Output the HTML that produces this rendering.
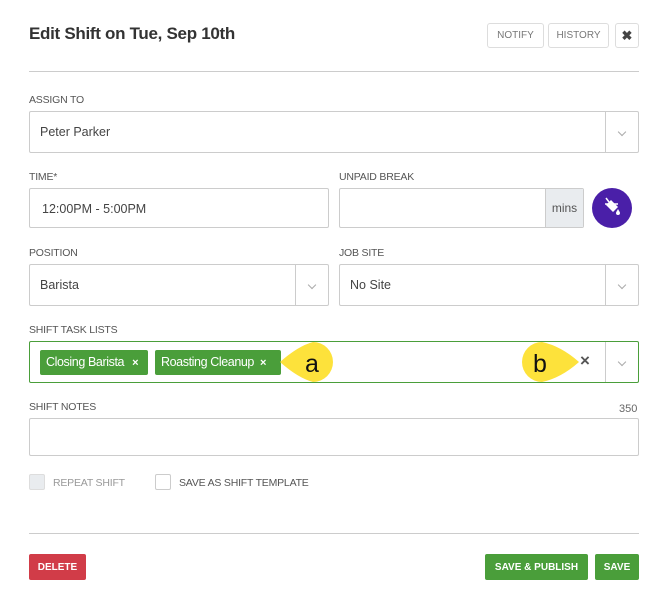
<!DOCTYPE html>
<html><head><style>
*{box-sizing:border-box;margin:0;padding:0}
body{width:668px;height:608px;background:#fff;font-family:"Liberation Sans",sans-serif;color:#333;position:relative;overflow:hidden}
.a{position:absolute}
.lbl{position:absolute;font-size:10.5px;color:#555;letter-spacing:-.2px}
.box{position:absolute;border:1px solid #ccc;border-radius:2px;background:#fff}
.txt{position:absolute;font-size:12.5px;color:#444}
.chev{position:absolute;top:0;bottom:0;width:33px;border-left:1px solid #ccc}
.chev:after{content:"";position:absolute;left:13px;top:50%;width:5px;height:5px;border-right:1px solid #aaa;border-bottom:1px solid #aaa;transform:translateY(-50%) rotate(45deg)}
.btn{position:absolute;border:1px solid #ddd;border-radius:3px;font-size:10px;color:#777;display:flex;align-items:center;justify-content:center}
.g{position:absolute;background:#4a9e3a;color:#fff;border-radius:2px;font-size:10px;font-weight:bold;display:flex;align-items:center;justify-content:center}
.tag{position:absolute;background:#4a9e3a;color:#fff;font-size:12.5px;border-radius:2px;height:25px;line-height:25px;padding-left:6px;letter-spacing:-.4px;white-space:nowrap}
</style></head><body>
<div class="a" style="left:29px;top:24px;font-size:17px;font-weight:bold;color:#333;letter-spacing:-.3px">Edit Shift on Tue, Sep 10th</div>
<div class="btn" style="left:487px;top:23px;width:57px;height:25px">NOTIFY</div>
<div class="btn" style="left:548px;top:23px;width:61px;height:25px">HISTORY</div>
<div class="btn" style="left:615px;top:23px;width:24px;height:25px;font-size:13px;color:#444;font-weight:bold">✖</div>
<div class="a" style="left:29px;top:71px;width:610px;height:1px;background:#ccc"></div>

<div class="lbl" style="left:29px;top:94px">ASSIGN TO</div>
<div class="box" style="left:29px;top:111px;width:610px;height:42px"><div class="txt" style="left:10px;top:13px">Peter Parker</div><div class="chev" style="right:0"></div></div>

<div class="lbl" style="left:29px;top:171px">TIME*</div>
<div class="box" style="left:29px;top:188px;width:300px;height:40px"><div class="txt" style="left:12px;top:13px">12:00PM - 5:00PM</div></div>
<div class="lbl" style="left:339px;top:171px">UNPAID BREAK</div>
<div class="box" style="left:339px;top:188px;width:245px;height:40px"><div class="a" style="right:0;top:0;bottom:0;width:38px;background:#e9ecef;border-left:1px solid #ccc;font-size:12px;color:#555;text-align:center;line-height:38px">mins</div></div>
<div class="a" style="left:592px;top:188px;width:40px;height:40px;border-radius:50%;background:#4a1fa8">
<svg width="40" height="40" viewBox="0 0 40 40"><path d="M14 17l5-5 7 7-5 5z" fill="#fff"/><path d="M13 16l13 0" stroke="#fff" stroke-width="1.5"/><path d="M17 14l-3-4" stroke="#fff" stroke-width="1.5"/><path d="M26 21c-1 2-2 3-2 4a2 2 0 0 0 4 0c0-1-1-2-2-4z" fill="#fff"/></svg></div>

<div class="lbl" style="left:29px;top:247px">POSITION</div>
<div class="box" style="left:29px;top:264px;width:300px;height:42px"><div class="txt" style="left:10px;top:13px">Barista</div><div class="chev" style="right:0"></div></div>
<div class="lbl" style="left:339px;top:247px">JOB SITE</div>
<div class="box" style="left:339px;top:264px;width:300px;height:42px"><div class="txt" style="left:10px;top:13px">No Site</div><div class="chev" style="right:0"></div></div>

<div class="lbl" style="left:29px;top:324px">SHIFT TASK LISTS</div>
<div class="box" style="left:29px;top:341px;width:610px;height:42px;border-color:#4a9e3a"><div class="chev" style="right:0"></div></div>
<div class="tag" style="left:40px;top:350px;width:108px">Closing Barista <b style="margin-left:5px;font-size:11px">×</b></div>
<div class="tag" style="left:155px;top:350px;width:126px">Roasting Cleanup <b style="margin-left:3px;font-size:11px">×</b></div>
<svg class="a" style="left:278px;top:340px" width="62" height="45"><path d="M2 22 Q20 6 35 2 A20 20 0 1 1 35 42 Q20 38 2 22z" fill="#fde23b"/><text x="27" y="32" font-family="Liberation Sans" font-size="25" fill="#111">a</text></svg>
<svg class="a" style="left:519px;top:340px" width="62" height="45"><path d="M60 22 Q42 6 23 2 A20 20 0 1 0 23 42 Q42 38 60 22z" fill="#fde23b"/><text x="14" y="32" font-family="Liberation Sans" font-size="25" fill="#111">b</text></svg>
<div class="a" style="left:580px;top:351px;font-size:17px;color:#555;font-weight:bold">×</div>

<div class="lbl" style="left:29px;top:401px">SHIFT NOTES</div>
<div class="a" style="left:619px;top:403px;font-size:11px;color:#666">350</div>
<div class="box" style="left:29px;top:418px;width:610px;height:38px"></div>

<div class="a" style="left:29px;top:474px;width:16px;height:16px;border:1px solid #ddd;border-radius:2px;background:#e9ecef"></div>
<div class="lbl" style="left:53px;top:477px;color:#999">REPEAT SHIFT</div>
<div class="a" style="left:155px;top:474px;width:16px;height:16px;border:1px solid #ccc;border-radius:2px"></div>
<div class="lbl" style="left:179px;top:477px">SAVE AS SHIFT TEMPLATE</div>

<div class="a" style="left:29px;top:533px;width:610px;height:1px;background:#ccc"></div>
<div class="g" style="left:29px;top:554px;width:57px;height:26px;background:#d13c48">DELETE</div>
<div class="g" style="left:485px;top:554px;width:103px;height:26px">SAVE &amp; PUBLISH</div>
<div class="g" style="left:595px;top:554px;width:44px;height:26px">SAVE</div>
</body></html>
